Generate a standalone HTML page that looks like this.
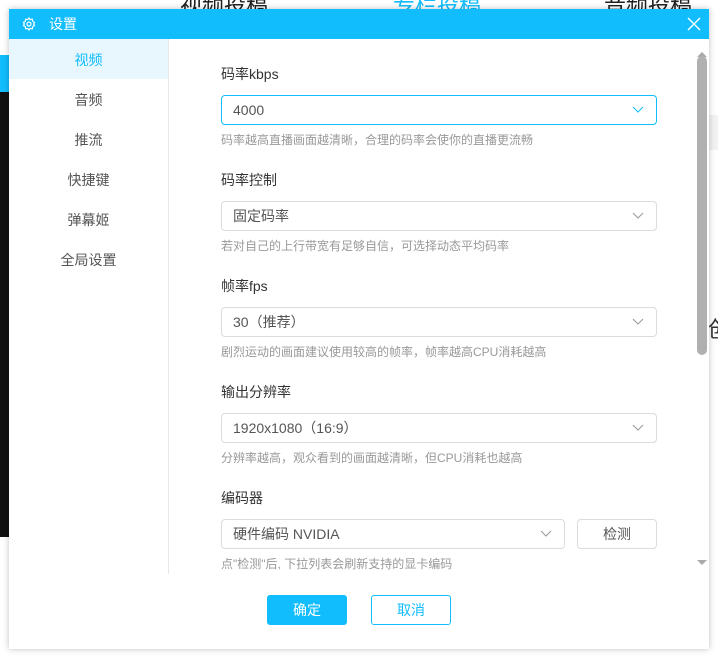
<!DOCTYPE html>
<html><head><meta charset="utf-8"><style>
*{margin:0;padding:0;box-sizing:border-box}
body{width:718px;height:658px;background:#fff;position:relative;overflow:hidden;font-family:"Liberation Sans","Noto Sans CJK SC",sans-serif;font-size:14px;color:#333}
.abs{position:absolute}
.bgt{position:absolute;top:-12px;font-size:22px;color:#222}
.dlg{position:absolute;left:9px;top:9px;width:700px;height:640px;background:#fff;box-shadow:0 0 6px rgba(0,0,0,.25)}
.hd{height:30px;background:#12bdfd;color:#fff;font-size:14px;line-height:30px;padding-left:40px;position:relative}
.side{position:absolute;left:0;top:30px;width:160px;height:535px;border-right:1px solid #e8e8e8}
.side div{height:40px;line-height:42px;text-align:center;color:#555;font-size:14px}
.side .on{background:#e8f7fe;color:#12bdfd}
.lbl{position:absolute;left:212px;font-size:14px;color:#333}
.sel{position:absolute;left:212px;width:436px;height:30px;border:1px solid #dcdcdc;border-radius:4px;line-height:28px;padding-left:11px;color:#555;font-size:14px}
.sel svg{position:absolute;right:12px;top:10px}
.hint{position:absolute;left:212px;font-size:12px;color:#999}
.btn{position:absolute;top:586px;width:80px;height:30px;border-radius:3px;text-align:center;line-height:28px;font-size:14px}
</style></head><body>
<div class="bgt" style="left:180px">视频投稿</div>
<div class="bgt" style="left:393px;color:#12bdfd">专栏投稿</div>
<div class="bgt" style="left:604px">音频投稿</div>
<div class="abs" style="left:0;top:55px;width:9px;height:37px;background:#12bdfd"></div>
<div class="abs" style="left:0;top:92px;width:9px;height:445px;background:#111"></div>
<div class="abs" style="left:709px;top:115px;width:9px;height:35px;background:#f2f2f2"></div>
<div class="abs" style="left:708px;top:312px;font-size:22px;color:#333">创</div>
<div class="dlg">
 <div class="hd"><svg class="abs" style="left:13px;top:8px" width="14" height="14" viewBox="0 0 14 14" fill="none" stroke="#fff" stroke-width="1.2"><path d="M7 1l1.3 1.6 2-.4.4 2L12.5 5.5 11.6 7l.9 1.5-1.8 1.3-.4 2-2-.4L7 13 5.7 11.4l-2 .4-.4-2L1.5 8.5 2.4 7 1.5 5.5l1.8-1.3.4-2 2 .4z"/><circle cx="7" cy="7" r="2"/></svg>设置
  <svg class="abs" style="right:8px;top:8px" width="14" height="14" viewBox="0 0 14 14" stroke="#fff" stroke-width="1.4"><path d="M1 1l12 12M13 1L1 13"/></svg></div>
 <div class="side"><div class="on">视频</div><div>音频</div><div>推流</div><div>快捷键</div><div>弹幕姬</div><div>全局设置</div></div>
 <div class="lbl" style="top:55px">码率kbps</div>
 <div class="sel" style="top:86px;border-color:#12bdfd">4000<svg width="12" height="8" viewBox="0 0 12 8" fill="none" stroke="#12bdfd"><path d="M1 1l5 5 5-5"/></svg></div>
 <div class="hint" style="top:122px">码率越高直播画面越清晰，合理的码率会使你的直播更流畅</div>
 <div class="lbl" style="top:161px">码率控制</div>
 <div class="sel" style="top:192px">固定码率<svg width="12" height="8" viewBox="0 0 12 8" fill="none" stroke="#999"><path d="M1 1l5 5 5-5"/></svg></div>
 <div class="hint" style="top:228px">若对自己的上行带宽有足够自信，可选择动态平均码率</div>
 <div class="lbl" style="top:267px">帧率fps</div>
 <div class="sel" style="top:298px">30（推荐）<svg width="12" height="8" viewBox="0 0 12 8" fill="none" stroke="#999"><path d="M1 1l5 5 5-5"/></svg></div>
 <div class="hint" style="top:334px">剧烈运动的画面建议使用较高的帧率，帧率越高CPU消耗越高</div>
 <div class="lbl" style="top:373px">输出分辨率</div>
 <div class="sel" style="top:404px">1920x1080（16:9）<svg width="12" height="8" viewBox="0 0 12 8" fill="none" stroke="#999"><path d="M1 1l5 5 5-5"/></svg></div>
 <div class="hint" style="top:440px">分辨率越高，观众看到的画面越清晰，但CPU消耗也越高</div>
 <div class="lbl" style="top:479px">编码器</div>
 <div class="sel" style="top:510px;width:344px">硬件编码 NVIDIA<svg width="12" height="8" viewBox="0 0 12 8" fill="none" stroke="#999"><path d="M1 1l5 5 5-5"/></svg></div>
 <div class="sel" style="top:510px;left:568px;width:80px;padding:0;text-align:center">检测</div>
 <div class="hint" style="top:546px">点"检测"后, 下拉列表会刷新支持的显卡编码</div>
 <div class="abs" style="left:688px;top:43px;width:0;height:0;border-left:5px solid transparent;border-right:5px solid transparent;border-bottom:5px solid #aaa"></div>
 <div class="abs" style="left:688px;top:47px;width:10px;height:299px;background:#b0b0b0;border-radius:5px"></div>
 <div class="abs" style="left:688px;top:551px;width:0;height:0;border-left:5px solid transparent;border-right:5px solid transparent;border-top:5px solid #aaa"></div>
 <div class="btn" style="left:258px;background:#12bdfd;color:#fff;border:1px solid #12bdfd">确定</div>
 <div class="btn" style="left:362px;border:1px solid #12bdfd;color:#12bdfd">取消</div>
</div>
</body></html>
